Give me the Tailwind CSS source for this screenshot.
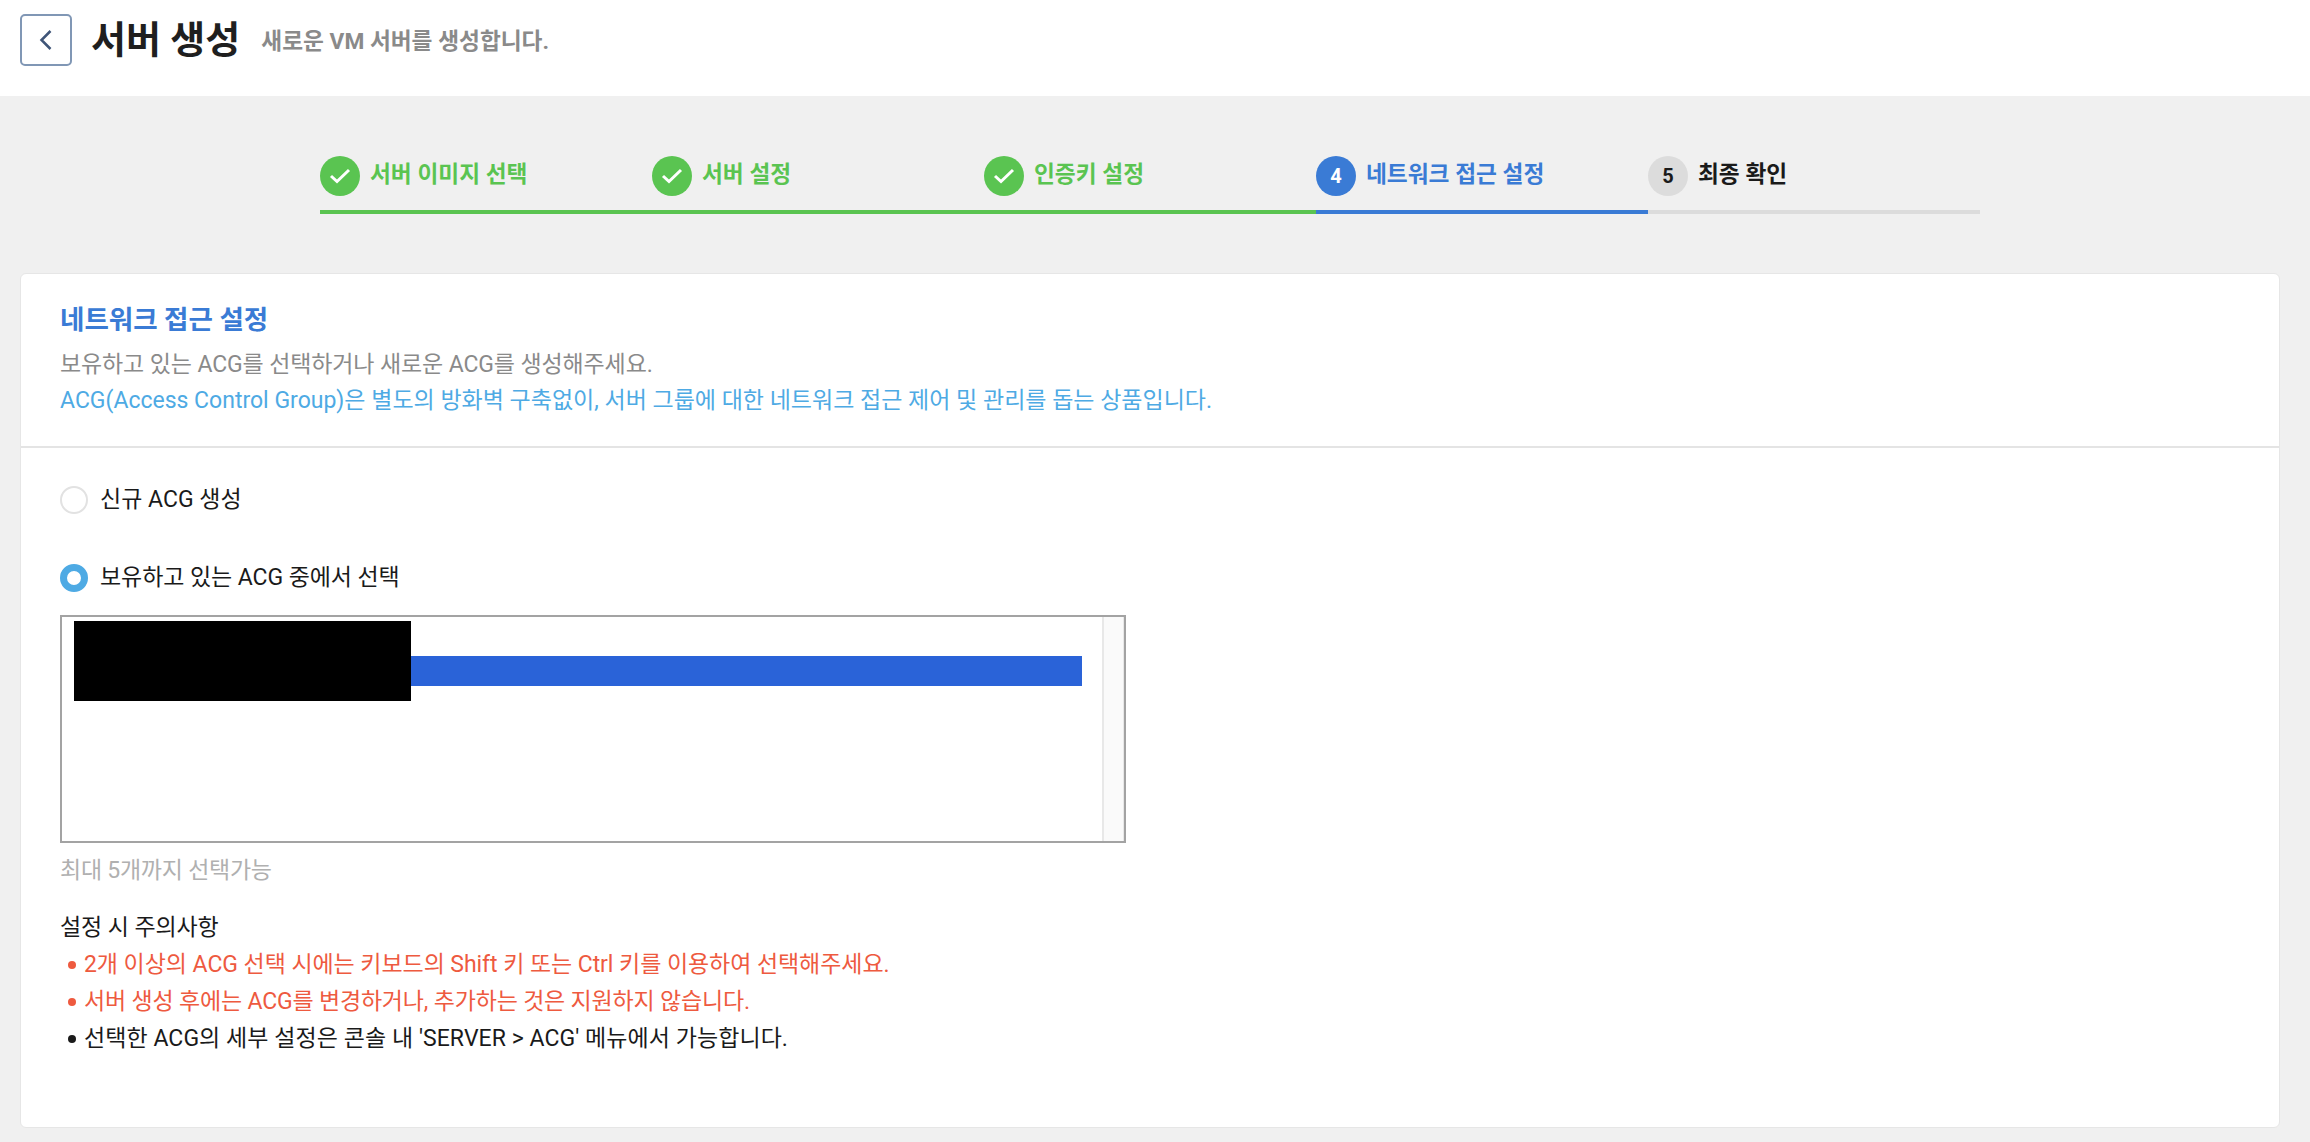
<!DOCTYPE html>
<html lang="ko">
<head>
<meta charset="utf-8">
<script src="https://cdn.jsdelivr.net/npm/@tailwindcss/browser@4"></script>
</head>
<body class="bg-[#f0f0f0] font-['Roboto','Noto_Sans_CJK_KR',sans-serif] text-[#1a1a1a] h-[1142px] overflow-hidden">
<header class="h-[96px] bg-white flex items-start pl-[20px] pt-[14px]">
  <button class="w-[52px] h-[52px] rounded-[5px] border-2 border-[#8097b5] flex items-center justify-center">
    <svg width="14" height="24" viewBox="0 0 14 24" fill="none" stroke="#3f5578" stroke-width="2.5"><path d="M11.5 3 L2.5 12 L11.5 21"/></svg>
  </button>
  <h1 class="ml-[19px] text-[38px] leading-[52px] font-bold text-[#1f1f1f]">서버 생성</h1>
  <p class="ml-[21px] text-[22.7px] leading-[56px] font-bold text-[#8a8a8a]">새로운 VM 서버를 생성합니다.</p>
</header>

<nav class="pl-[320px] pt-[60px] flex">
  <div class="w-[332px] h-[58px] border-b-4 border-[#5ac451] flex items-start gap-[10px]">
    <span class="w-[40px] h-[40px] rounded-full bg-[#5ac451] flex items-center justify-center"><svg width="22" height="18" viewBox="0 0 22 18" fill="none" stroke="#fff" stroke-width="3"><path d="M2 9 L8 14.5 L20 3"/></svg></span>
    <span class="text-[22.7px] leading-[38px] font-bold text-[#5ac451]">서버 이미지 선택</span>
  </div>
  <div class="w-[332px] h-[58px] border-b-4 border-[#5ac451] flex items-start gap-[10px]">
    <span class="w-[40px] h-[40px] rounded-full bg-[#5ac451] flex items-center justify-center"><svg width="22" height="18" viewBox="0 0 22 18" fill="none" stroke="#fff" stroke-width="3"><path d="M2 9 L8 14.5 L20 3"/></svg></span>
    <span class="text-[22.7px] leading-[38px] font-bold text-[#5ac451]">서버 설정</span>
  </div>
  <div class="w-[332px] h-[58px] border-b-4 border-[#5ac451] flex items-start gap-[10px]">
    <span class="w-[40px] h-[40px] rounded-full bg-[#5ac451] flex items-center justify-center"><svg width="22" height="18" viewBox="0 0 22 18" fill="none" stroke="#fff" stroke-width="3"><path d="M2 9 L8 14.5 L20 3"/></svg></span>
    <span class="text-[22.7px] leading-[38px] font-bold text-[#5ac451]">인증키 설정</span>
  </div>
  <div class="w-[332px] h-[58px] border-b-4 border-[#3a7bd5] flex items-start gap-[10px]">
    <span class="w-[40px] h-[40px] rounded-full bg-[#3a7bd5] flex items-center justify-center text-white text-[20px] font-bold">4</span>
    <span class="text-[22.7px] leading-[38px] font-bold text-[#3a7bd5]">네트워크 접근 설정</span>
  </div>
  <div class="w-[332px] h-[58px] border-b-4 border-[#dcdcdc] flex items-start gap-[10px]">
    <span class="w-[40px] h-[40px] rounded-full bg-[#dcdcdc] flex items-center justify-center text-[#1a1a1a] text-[20px] font-bold">5</span>
    <span class="text-[22.7px] leading-[38px] font-bold text-[#1a1a1a]">최종 확인</span>
  </div>
</nav>

<main class="ml-[20px] mr-[30px] mt-[59px] h-[855px] bg-white rounded-[6px] border border-[#e6e6e6]">
  <section class="h-[174px] border-b-2 border-[#e4e4e4] pl-[39px] pt-[27px]">
    <h2 class="text-[26.5px] leading-[38px] font-bold text-[#3a7bd5]">네트워크 접근 설정</h2>
    <p class="text-[23px] leading-[36px] mt-[8px] text-[#8a8a8a] tracking-[-0.12px]">보유하고 있는 ACG를 선택하거나 새로운 ACG를 생성해주세요.</p>
    <p class="text-[23px] leading-[36px] text-[#4eaae4]">ACG(Access Control Group)은 별도의 방화벽 구축없이, 서버 그룹에 대한 네트워크 접근 제어 및 관리를 돕는 상품입니다.</p>
  </section>
  <section class="pl-[39px] pt-[34px]">
    <label class="flex items-center gap-[12px] h-[36px]">
      <span class="w-[28px] h-[28px] rounded-full border-2 border-[#e2e2e2] bg-white"></span>
      <span class="text-[23px]">신규 ACG 생성</span>
    </label>
    <label class="flex items-center gap-[12px] h-[36px] mt-[42px]">
      <span class="w-[28px] h-[28px] rounded-full border-[7px] border-[#4eaae4] bg-white"></span>
      <span class="text-[23px] tracking-[-0.08px]">보유하고 있는 ACG 중에서 선택</span>
    </label>
    <div class="w-[1066px] h-[228px] mt-[19px] border-2 border-[#a3a3a3] bg-white flex">
      <div class="flex-1 pl-[12px] pt-[4px] flex items-start">
        <div class="w-[337px] h-[80px] bg-black"></div>
        <div class="w-[671px] h-[30px] mt-[35px] bg-[#2a63d8]"></div>
      </div>
      <div class="w-[22px] bg-[#fafafa] border-l-2 border-r border-l-[#e8e8e8] border-r-[#e8e8e8]"></div>
    </div>
    <p class="text-[23px] leading-[36px] mt-[10px] text-[#b0b0b0] tracking-[-0.25px]">최대 5개까지 선택가능</p>
    <p class="text-[23px] leading-[36px] mt-[21px] text-[#1a1a1a] tracking-[-0.1px]">설정 시 주의사항</p>
    <ul class="text-[23px] leading-[37px]">
      <li class="flex items-center text-[#ee5a3f] tracking-[-0.06px]"><span class="w-[8px] h-[8px] rounded-full bg-[#ee5a3f] ml-[8px] mr-[8px]"></span>2개 이상의 ACG 선택 시에는 키보드의 Shift 키 또는 Ctrl 키를 이용하여 선택해주세요.</li>
      <li class="flex items-center text-[#ee5a3f] tracking-[-0.18px]"><span class="w-[8px] h-[8px] rounded-full bg-[#ee5a3f] ml-[8px] mr-[8px]"></span>서버 생성 후에는 ACG를 변경하거나, 추가하는 것은 지원하지 않습니다.</li>
      <li class="flex items-center text-[#1a1a1a] tracking-[0.06px]"><span class="w-[8px] h-[8px] rounded-full bg-[#1a1a1a] ml-[8px] mr-[8px]"></span>선택한 ACG의 세부 설정은 콘솔 내 'SERVER &gt; ACG' 메뉴에서 가능합니다.</li>
    </ul>
  </section>
</main>
</body>
</html>
